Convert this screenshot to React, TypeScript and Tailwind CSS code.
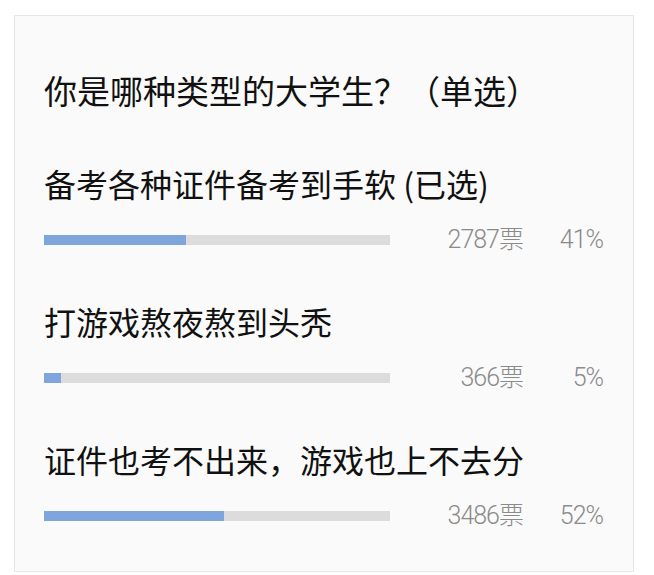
import React from "react";

const options = [
  { text: "备考各种证件备考到手软 (已选)", votes: "2787票", pct: 41 },
  { text: "打游戏熬夜熬到头秃", votes: "366票", pct: 5 },
  { text: "证件也考不出来，游戏也上不去分", votes: "3486票", pct: 52 },
];

export default function App() {
  return (
    <div className="w-[654px] h-[575px] bg-white pt-[15px] pl-[14px]" style={{ fontFamily: '"Noto Sans CJK SC", "Noto Sans", sans-serif' }}>
      <div className="w-[620px] h-[557px] bg-[#fafafa] border border-[#e6e6e6] pl-[29px] pt-[54px]">
        <div className="text-[33px] leading-[40px] text-[#111]">你是哪种类型的大学生？（单选）</div>
        {options.map((o, i) => (
          <div key={i} className={i === 0 ? "mt-[53px]" : "mt-[51px]"}>
            <div className="text-[32px] leading-[40px] text-[#111]">{o.text}</div>
            <div className="mt-[27px] flex items-center h-[20px]">
              <div className="w-[346px] h-[10px] bg-[#dcdcdc]">
                <div className="h-full bg-[#7fa6dc]" style={{ width: `${o.pct}%` }} />
              </div>
              <div
                className="w-[133px] text-right text-[25px] leading-[20px] text-[#8a8a8a] tracking-[-1px]"
                style={{ fontFamily: 'Roboto, "Noto Sans CJK SC", sans-serif', fontWeight: 300 }}
              >
                {o.votes}
              </div>
              <div
                className="w-[80px] text-right text-[25px] leading-[20px] text-[#8a8a8a] tracking-[-1px]"
                style={{ fontFamily: 'Roboto, "Noto Sans CJK SC", sans-serif', fontWeight: 300 }}
              >
                {o.pct}%
              </div>
            </div>
          </div>
        ))}
      </div>
    </div>
  );
}
